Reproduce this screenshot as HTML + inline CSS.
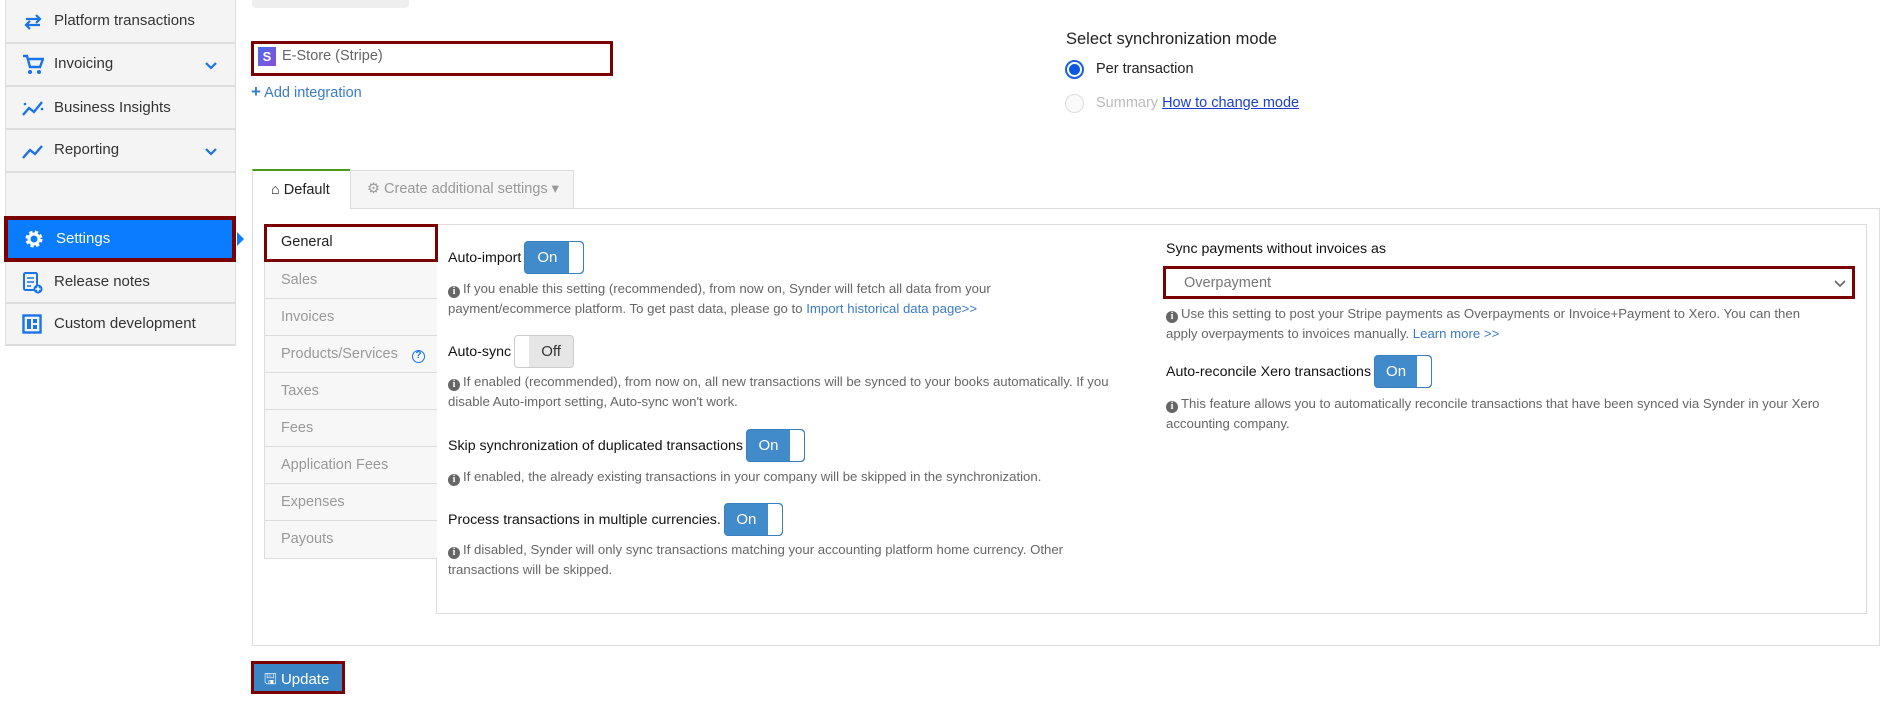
<!DOCTYPE html>
<html><head><meta charset="utf-8"><style>
*{box-sizing:border-box;margin:0;padding:0}
body{width:1884px;height:703px;background:#fff;font-family:"Liberation Sans",Arial,sans-serif;position:relative;overflow:hidden;color:#222}
.a{position:absolute}
.side{left:5px;top:0;width:231px;height:346px;background:#f4f4f4;border-left:1px solid #ddd;border-right:1px solid #ddd}
.si{position:absolute;left:0;width:229px;border-bottom:2px solid #ddd;font-size:15px;color:#333}
.si span{position:absolute;left:48px}
.si svg{position:absolute;left:16px}
.help{font-size:13.2px;color:#666;line-height:20px}
.row{position:absolute;display:flex;align-items:center;gap:3px}
.lbl{font-size:14.2px;color:#111}
.tog{position:relative;height:33px;border-radius:4px;overflow:hidden;font-size:15px;flex:none}
.on{background:#428bca;color:#fff;border:1px solid #3b7fbf}
.on .t{position:absolute;left:0;top:0;bottom:0;right:14px;text-align:center;line-height:31px}
.on .k{position:absolute;right:0;top:0;bottom:0;width:14px;background:#fff;border-radius:0 4px 4px 0}
.off{background:#e6e6e6;color:#333;border:1px solid #ccc}
.off .k{position:absolute;left:0;top:0;bottom:0;width:14px;background:#fff}
.off .t{position:absolute;left:14px;right:0;top:0;bottom:0;text-align:center;line-height:31px}
.i{display:inline-block;width:12px;height:12px;border-radius:50%;background:#666;color:#fff;font-size:10px;line-height:12px;text-align:center;font-weight:bold;font-family:"Liberation Serif",serif;vertical-align:-1px;margin-right:3px}
.nav{position:absolute;left:265px;width:172px;height:37px;background:#f7f7f7;border-bottom:1px solid #ddd;font-size:14.5px;color:#999;padding-left:16px;line-height:37px}
a{color:#3a7bc8;text-decoration:none}
</style></head><body>
<div class="a" style="left:252px;top:0;width:157px;height:8px;background:#eee;border-radius:0 0 4px 4px"></div>

<div class="a side">
 <div class="si" style="top:0;height:44px"><svg width="22" height="16" viewBox="0 0 22 16" style="top:14px"><path d="M4 5h14M14 1l4 4-4 4M18 11H4M8 7l-4 4 4 4" stroke="#1a73e8" stroke-width="2.2" fill="none"/></svg><span style="top:12px">Platform transactions</span></div>
 <div class="si" style="top:44px;height:43px"><svg width="22" height="22" viewBox="0 0 22 22" style="top:10px"><path d="M1 2h4l3 11h10l3-8H7" stroke="#1a73e8" stroke-width="2.4" fill="none"/><circle cx="8" cy="18" r="2" fill="#1a73e8"/><circle cx="17" cy="18" r="2" fill="#1a73e8"/></svg><span style="top:11px">Invoicing</span><svg width="14" height="10" viewBox="0 0 14 10" style="left:198px;top:17px"><path d="M2 2l5 5 5-5" stroke="#1a73e8" stroke-width="2.2" fill="none"/></svg></div>
 <div class="si" style="top:87px;height:43px"><svg width="24" height="18" viewBox="0 0 24 18" style="top:12px"><path d="M1 16l6-7 5 4 8-10" stroke="#1a73e8" stroke-width="2.4" fill="none"/><circle cx="3" cy="5" r="1.3" fill="#1a73e8"/><circle cx="20" cy="10" r="1.3" fill="#1a73e8"/></svg><span style="top:12px">Business Insights</span></div>
 <div class="si" style="top:130px;height:43px"><svg width="22" height="16" viewBox="0 0 22 16" style="top:14px"><path d="M1 14l7-8 5 4 7-8" stroke="#1a73e8" stroke-width="2.4" fill="none"/></svg><span style="top:11px">Reporting</span><svg width="14" height="10" viewBox="0 0 14 10" style="left:198px;top:17px"><path d="M2 2l5 5 5-5" stroke="#1a73e8" stroke-width="2.2" fill="none"/></svg></div>
 <div class="si" style="top:216px;height:46px;background:#0a7cff;border:4px solid #7b0000;color:#fff;left:-2px;width:232px"><svg width="20" height="20" viewBox="0 0 20 20" style="top:9px"><circle cx="10" cy="10" r="6.5" fill="none" stroke="#fff" stroke-width="4" stroke-dasharray="3 2.2"/><circle cx="10" cy="10" r="5" fill="none" stroke="#fff" stroke-width="3"/></svg><span style="top:10px">Settings</span></div>
 <div class="si" style="top:262px;height:42px"><svg width="22" height="22" viewBox="0 0 22 22" style="top:10px"><rect x="2" y="1" width="13" height="17" rx="1.5" stroke="#1a73e8" stroke-width="2" fill="none"/><path d="M5 6h7M5 10h7M5 14h4" stroke="#1a73e8" stroke-width="1.6"/><circle cx="16" cy="17" r="4.5" fill="#1a73e8"/><path d="M16 14.5v5M13.5 17h5" stroke="#fff" stroke-width="1.5"/></svg><span style="top:11px">Release notes</span></div>
 <div class="si" style="top:304px;height:42px"><svg width="20" height="20" viewBox="0 0 20 20" style="top:10px"><rect x="1.5" y="1.5" width="17" height="17" stroke="#1a73e8" stroke-width="2.4" fill="none"/><path d="M5 5h4v10H5zM11 5h4v4h-4zM11 11h4v4h-4z" fill="#1a73e8"/></svg><span style="top:11px">Custom development</span></div>
</div>
<div class="a" style="left:237px;top:232px;width:0;height:0;border-top:7px solid transparent;border-bottom:7px solid transparent;border-left:7px solid #0a7cff"></div>

<div class="a" style="left:251px;top:41px;width:362px;height:35px;border:3px solid #7b0000"></div>
<div class="a" style="left:258px;top:47px;width:18px;height:19px;background:linear-gradient(135deg,#4b6cf0,#8a4fd6);color:#fff;font-weight:bold;font-size:13px;text-align:center;line-height:19px">S</div>
<div class="a" style="left:282px;top:48px;font-size:14.5px;color:#666">E-Store (Stripe)</div>
<div class="a" style="left:251px;top:82px;font-size:14.5px;color:#3a7bc8"><b style="font-size:17px">+</b> Add integration</div>

<div class="a" style="left:1066px;top:30px;font-size:16.5px;color:#222">Select synchronization mode</div>
<div class="a" style="left:1065px;top:60px;width:19px;height:19px;border-radius:50%;border:2px solid #1a5fe0;background:#fff"><div style="margin:2px;width:11px;height:11px;border-radius:50%;background:#0b58e0"></div></div>
<div class="a" style="left:1096px;top:61px;font-size:14.5px">Per transaction</div>
<div class="a" style="left:1065px;top:94px;width:19px;height:19px;border-radius:50%;border:1px solid #ddd;background:#fafafa"></div>
<div class="a" style="left:1096px;top:95px;font-size:14.5px;color:#bbb">Summary <span style="color:#1a3fd0;text-decoration:underline">How to change mode</span></div>

<div class="a" style="left:252px;top:208px;width:1628px;height:438px;border:1px solid #ddd"></div>
<div class="a" style="left:252px;top:169px;width:98px;height:40px;background:#fff;border-top:2px solid #4a9a1a;border-left:1px solid #ddd;font-size:14.5px;padding:11px 0 0 18px">&#8962;&#xFE0E; Default</div>
<div class="a" style="left:350px;top:170px;width:224px;height:38px;background:#f5f5f5;border:1px solid #ddd;border-bottom:none;font-size:14.5px;color:#999;padding:10px 0 0 16px">⚙ Create additional settings ▾</div>

<div class="a" style="left:436px;top:224px;width:1431px;height:390px;border:1px solid #ddd"></div>
<div class="a" style="left:264px;top:224px;width:173px;height:335px;border:1px solid #ddd;background:#f7f7f7"></div>
<div class="nav" style="top:224px;background:#fff;border:3px solid #7b0000;color:#222;line-height:31px;padding-left:14px;height:38px;left:264px;width:174px">General</div>
<div class="nav" style="top:262px">Sales</div>
<div class="nav" style="top:299px">Invoices</div>
<div class="nav" style="top:336px">Products/Services <span style="display:inline-block;width:13px;height:13px;border:1.5px solid #1a73e8;border-radius:50%;color:#1a73e8;font-size:10px;line-height:10px;text-align:center;margin-left:10px;font-weight:bold">?</span></div>
<div class="nav" style="top:373px">Taxes</div>
<div class="nav" style="top:410px">Fees</div>
<div class="nav" style="top:447px">Application Fees</div>
<div class="nav" style="top:484px">Expenses</div>
<div class="nav" style="top:521px;border-bottom:none">Payouts</div>

<div class="row" style="left:448px;top:241px"><span class="lbl">Auto-import</span><div class="tog on" style="width:60px"><div class="t">On</div><div class="k"></div></div></div>
<div class="a help" style="left:448px;top:279px;width:650px"><span class="i">i</span>If you enable this setting (recommended), from now on, Synder will fetch all data from your payment/ecommerce platform. To get past data, please go to <a>Import historical data page&gt;&gt;</a></div>

<div class="row" style="left:448px;top:335px"><span class="lbl">Auto-sync</span><div class="tog off" style="width:60px"><div class="k"></div><div class="t">Off</div></div></div>
<div class="a help" style="left:448px;top:372px;width:690px"><span class="i">i</span>If enabled (recommended), from now on, all new transactions will be synced to your books automatically. If you disable Auto-import setting, Auto-sync won't work.</div>

<div class="row" style="left:448px;top:429px"><span class="lbl">Skip synchronization of duplicated transactions</span><div class="tog on" style="width:59px"><div class="t">On</div><div class="k"></div></div></div>
<div class="a help" style="left:448px;top:467px"><span class="i">i</span>If enabled, the already existing transactions in your company will be skipped in the synchronization.</div>

<div class="row" style="left:448px;top:503px"><span class="lbl">Process transactions in multiple currencies.</span><div class="tog on" style="width:59px"><div class="t">On</div><div class="k"></div></div></div>
<div class="a help" style="left:448px;top:540px;width:680px"><span class="i">i</span>If disabled, Synder will only sync transactions matching your accounting platform home currency. Other transactions will be skipped.</div>

<div class="a lbl" style="left:1166px;top:241px">Sync payments without invoices as</div>
<div class="a" style="left:1163px;top:266px;width:692px;height:33px;border:3px solid #7b0000;font-size:14.5px;color:#777;padding:6px 0 0 18px">Overpayment<svg width="12" height="8" viewBox="0 0 12 8" style="position:absolute;right:6px;top:11px"><path d="M1 1l5 5 5-5" stroke="#666" stroke-width="1.6" fill="none"/></svg></div>
<div class="a help" style="left:1166px;top:304px;width:660px"><span class="i">i</span>Use this setting to post your Stripe payments as Overpayments or Invoice+Payment to Xero. You can then apply overpayments to invoices manually. <a>Learn more &gt;&gt;</a></div>
<div class="row" style="left:1166px;top:355px"><span class="lbl">Auto-reconcile Xero transactions</span><div class="tog on" style="width:58px"><div class="t">On</div><div class="k"></div></div></div>
<div class="a help" style="left:1166px;top:394px;width:680px"><span class="i">i</span>This feature allows you to automatically reconcile transactions that have been synced via Synder in your Xero accounting company.</div>

<div class="a" style="left:251px;top:661px;width:94px;height:33px;background:#3a85c6;border:3px solid #7b0000;color:#fff;font-size:15px;padding:5px 0 0 10px">🖫 Update</div>
</body></html>
